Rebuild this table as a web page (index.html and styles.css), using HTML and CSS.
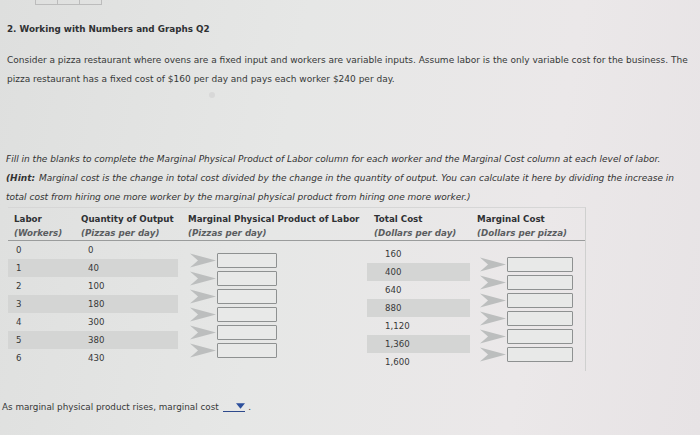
FILE: index.html
```html
<!DOCTYPE html>
<html>
<head>
<meta charset="utf-8">
<link rel="stylesheet" href="styles.css">
</head>
<body>
<div class="page">
  <div class="topbtns"><span></span><span></span><span></span></div>
  <h2 class="title">2. Working with Numbers and Graphs Q2</h2>
  <p class="intro">Consider a pizza restaurant where ovens are a fixed input and workers are variable inputs. Assume labor is the only variable cost for the business. The pizza restaurant has a fixed cost of $160 per day and pays each worker $240 per day.</p>
  <div class="dot"></div>
  <div class="instr">
    <span class="ln">Fill in the blanks to complete the Marginal Physical Product of Labor column for each worker and the Marginal Cost column at each level of labor.</span>
    <span class="ln"><b>(Hint:</b> <span>Marginal cost is the change in total cost divided by the change in the quantity of output. You can calculate it here by dividing the increase in</span></span>
    <span class="ln">total cost from hiring one more worker by the marginal physical product from hiring one more worker.)</span>
  </div>

  <div class="tbl">
    <div class="head">
      <div class="h c-lab"><b>Labor</b><i>(Workers)</i></div>
      <div class="h c-qty"><b>Quantity of Output</b><i>(Pizzas per day)</i></div>
      <div class="h c-mpp"><b>Marginal Physical Product of Labor</b><i>(Pizzas per day)</i></div>
      <div class="h c-tc"><b>Total Cost</b><i>(Dollars per day)</i></div>
      <div class="h c-mc"><b>Marginal Cost</b><i>(Dollars per pizza)</i></div>
    </div>
    <div class="body">
      <div class="col left">
        <div class="row"><span class="lab">0</span><span class="qty">0</span></div>
        <div class="row alt"><span class="lab">1</span><span class="qty">40</span></div>
        <div class="row"><span class="lab">2</span><span class="qty">100</span></div>
        <div class="row alt"><span class="lab">3</span><span class="qty">180</span></div>
        <div class="row"><span class="lab">4</span><span class="qty">300</span></div>
        <div class="row alt"><span class="lab">5</span><span class="qty">380</span></div>
        <div class="row"><span class="lab">6</span><span class="qty">430</span></div>
      </div>
      <div class="col inputs mpp">
        <div class="irow"><svg class="arr" viewBox="0 0 26 14"><polygon points="0,0 26,7 0,14 8,7"/></svg><span class="box"></span></div>
        <div class="irow"><svg class="arr" viewBox="0 0 26 14"><polygon points="0,0 26,7 0,14 8,7"/></svg><span class="box"></span></div>
        <div class="irow"><svg class="arr" viewBox="0 0 26 14"><polygon points="0,0 26,7 0,14 8,7"/></svg><span class="box"></span></div>
        <div class="irow"><svg class="arr" viewBox="0 0 26 14"><polygon points="0,0 26,7 0,14 8,7"/></svg><span class="box"></span></div>
        <div class="irow"><svg class="arr" viewBox="0 0 26 14"><polygon points="0,0 26,7 0,14 8,7"/></svg><span class="box"></span></div>
        <div class="irow"><svg class="arr" viewBox="0 0 26 14"><polygon points="0,0 26,7 0,14 8,7"/></svg><span class="box"></span></div>
      </div>
      <div class="col tc">
        <div class="row">160</div>
        <div class="row alt">400</div>
        <div class="row">640</div>
        <div class="row alt">880</div>
        <div class="row">1,120</div>
        <div class="row alt">1,360</div>
        <div class="row">1,600</div>
      </div>
      <div class="col inputs mc">
        <div class="irow"><svg class="arr" viewBox="0 0 26 14"><polygon points="0,0 26,7 0,14 8,7"/></svg><span class="box"></span></div>
        <div class="irow"><svg class="arr" viewBox="0 0 26 14"><polygon points="0,0 26,7 0,14 8,7"/></svg><span class="box"></span></div>
        <div class="irow"><svg class="arr" viewBox="0 0 26 14"><polygon points="0,0 26,7 0,14 8,7"/></svg><span class="box"></span></div>
        <div class="irow"><svg class="arr" viewBox="0 0 26 14"><polygon points="0,0 26,7 0,14 8,7"/></svg><span class="box"></span></div>
        <div class="irow"><svg class="arr" viewBox="0 0 26 14"><polygon points="0,0 26,7 0,14 8,7"/></svg><span class="box"></span></div>
        <div class="irow"><svg class="arr" viewBox="0 0 26 14"><polygon points="0,0 26,7 0,14 8,7"/></svg><span class="box"></span></div>
      </div>
    </div>
  </div>

  <p class="final">As marginal physical product rises, marginal cost <span class="dd"><svg viewBox="0 0 10 6"><polygon points="0,0 10,0 5,6"/></svg></span> .</p>
</div>
</body>
</html>
```

FILE: styles.css
```css
html, body {
  margin: 0;
  padding: 0;
}
body {
  width: 700px;
  height: 435px;
  overflow: hidden;
  background: linear-gradient(100deg, #dedfde 0%, #e6e7e6 40%, #ebe8e9 75%, #e7e3e5 100%);
  font-family: "DejaVu Sans", Verdana, sans-serif;
  color: #363838;
}
.page {
  position: relative;
  height: 435px;
}
.topbtns {
  display: flex;
  margin-left: 35px;
  height: 5px;
}
.topbtns span {
  width: 21px;
  height: 4px;
  border: 1px solid #bcbcbc;
  border-top: none;
  margin-right: -1px;
}
.title {
  margin: 18px 0 0 7px;
  font-size: 8.8px;
  font-weight: bold;
  line-height: 12px;
  color: #2f3133;
}
.intro {
  margin: 16px 0 0 7px;
  font-size: 9px;
  line-height: 19px;
  width: 700px;
}
.dot {
  margin: 3px 0 0 209px;
  width: 6px;
  height: 6px;
  border-radius: 50%;
  background: #d8d8d8;
}
.instr {
  margin: 52px 0 0 6px;
  font-size: 9px;
  line-height: 19px;
  font-style: italic;
  color: #333;
  display: flex;
  flex-direction: column;
}
.ln {
  display: block;
  white-space: nowrap;
}
.instr b {
  font-style: italic;
  margin-right: 1px;
}
.tbl {
  margin: 0 0 0 8px;
  width: 577px;
  border-right: 1px solid #cfd0cf;
  border-top: 1px solid #d6d6d6;
}
.head {
  display: flex;
  border-bottom: 1px solid #9a9c9c;
  padding: 4px 0 0;
}
.h {
  display: flex;
  flex-direction: column;
  font-size: 8.7px;
  line-height: 14px;
  white-space: nowrap;
}
.h b {
  color: #2f3134;
}
.h i {
  font-weight: bold;
  color: #5a5d60;
}
.c-lab { width: 67px; padding-left: 6px; box-sizing: border-box; }
.c-qty { width: 107px; padding-left: 6px; box-sizing: border-box; }
.c-mpp { width: 185px; padding-left: 6px; box-sizing: border-box; }
.c-tc { width: 104px; padding-left: 7px; box-sizing: border-box; }
.c-mc { width: 114px; padding-left: 6px; box-sizing: border-box; }

.body {
  display: flex;
  font-size: 8.6px;
}
.col {
  display: flex;
  flex-direction: column;
}
.row {
  height: 18px;
  display: flex;
  align-items: center;
}
.row.alt {
  background: #d4d5d4;
}
.left {
  width: 170px;
}
.lab {
  width: 73px;
  padding-left: 8px;
  box-sizing: border-box;
}
.qty {
  padding-left: 7px;
}
.inputs {
  padding-top: 10px;
}
.mpp {
  width: 189px;
  padding-left: 12px;
  box-sizing: border-box;
}
.tc {
  width: 103px;
  padding-top: 4px;
}
.tc .row {
  padding-left: 18px;
}
.mc {
  padding-top: 14px;
  padding-left: 10px;
}
.irow {
  height: 18px;
  display: flex;
  align-items: center;
}
.arr {
  width: 26px;
  height: 15px;
  fill: #bcbebe;
  margin-right: 1px;
}
.box {
  width: 58px;
  height: 13px;
  border: 1px solid #8e9191;
  border-radius: 1px;
  background: #e8e9e8;
}
.mc .box {
  width: 64px;
}
.final {
  margin: 30px 0 0 2px;
  font-size: 8.8px;
  line-height: 12px;
}
.dd {
  display: inline-block;
  width: 22px;
  height: 9px;
  border-bottom: 1px solid #2e4a8c;
  margin-left: 2px;
  vertical-align: -1px;
  text-align: right;
}
.dd svg {
  width: 9px;
  height: 6px;
  fill: #2d4f9c;
  vertical-align: 2px;
}
```
